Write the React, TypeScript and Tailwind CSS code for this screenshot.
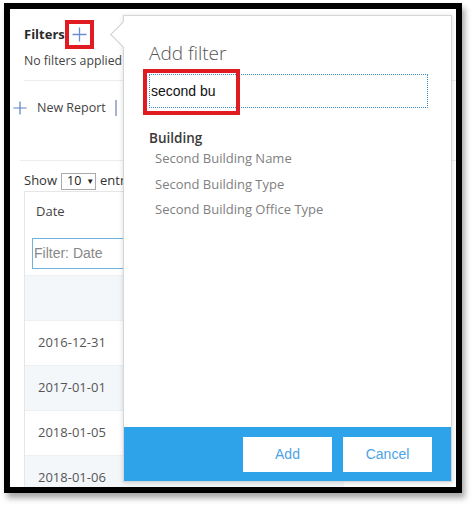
import React from "react";

const seg = { fontFamily: '"Open Sans", "Noto Sans", sans-serif' };
const arial = { fontFamily: '"Liberation Sans", Arial, sans-serif' };

function Plus({ size, color }: { size: number; color: string }) {
  return (
    <svg width={size} height={size} viewBox="0 0 16 16" fill="none">
      <path d="M8 0.5V15.5M0.5 8H15.5" stroke={color} strokeWidth="1.4" />
    </svg>
  );
}

export default function App() {
  const rows = [
    { d: "2016-12-31", bg: "bg-white" },
    { d: "2017-01-01", bg: "bg-[#f4f7fa]" },
    { d: "2018-01-05", bg: "bg-white" },
    { d: "2018-01-06", bg: "bg-[#f4f7fa]" },
  ];
  return (
    <div className="w-[474px] h-[506px] bg-white overflow-hidden" style={seg}>
      <div className="ml-[4px] mt-[3px] w-[458px] h-[490px] border-[6px] border-black bg-white relative overflow-hidden shadow-[3px_5px_6px_rgba(0,0,0,0.35)]">
        {/* page behind */}
        <div className="flex flex-col">
          <div className="pl-[14px] pt-[11px]">
            <div className="flex items-center h-[29px]">
              <span className="text-[13px] font-bold text-[#2b2b2b] leading-[29px]">Filters</span>
              <div className="w-[29px] h-[29px] border-[4px] border-[#e01b22] flex items-center justify-center">
                <Plus size={15} color="#6d8bd6" />
              </div>
            </div>
            <div className="mt-[2px] h-[20px] leading-[20px] text-[12.3px] text-[#444] whitespace-nowrap">No filters applied</div>
            <div className="mt-[9px] border-t border-[#ececec]" />
          </div>
          <div className="flex items-center h-[30px] mt-[12px] pl-[3px]">
            <Plus size={14} color="#5f82cc" />
            <span className="ml-[10px] text-[12.5px] text-[#444]">New Report</span>
            <span className="ml-[9px] w-[2px] h-[16px] bg-[#a8b2cc]" />
          </div>
          <div className="ml-[10px] mt-[37px] border-t border-[#ececec]" />
          <div className="pl-[14px] mt-[11px] flex items-center h-[18px] text-[13px] text-[#333]">
            <span>Show</span>
            <span className="ml-[4px] w-[35px] h-[17px] border border-[#aaa] flex items-center pl-[5px] text-[12.5px] text-[#222]">
              10<span className="ml-[5px] text-[8px]">▼</span>
            </span>
            <span className="ml-[4px]">entries</span>
          </div>
          <div className="ml-[14px] mt-[1px] w-[320px] border-l border-t border-[#e6e6e6]">
            <div className="h-[40px] flex items-center pl-[11px] text-[13px] text-[#444]">Date</div>
            <div className="h-[43px] pl-[7px] pt-[6px]">
              <div className="w-[150px] h-[31px] border border-[#6fb3dd] flex items-center pl-[1px] text-[14px] text-[#888]" style={arial}>
                Filter: Date
              </div>
            </div>
            <div className="h-[45px] bg-[#f4f7fa] border-t border-[#eef1f4]" />
            {rows.map((r) => (
              <div key={r.d} className={`h-[45px] ${r.bg} border-t border-[#eef1f4] flex items-center pl-[13px] text-[13px] text-[#555]`}>
                {r.d}
              </div>
            ))}
          </div>
        </div>

        {/* popover */}
        <div className="absolute left-[113px] top-[6px] w-[329px] h-[467px] bg-white border border-[#d6d6d6] shadow-[0_1px_5px_rgba(0,0,0,0.15)] flex flex-col">
          <div className="absolute left-[-10px] top-[9px] w-[19px] h-[19px] bg-white border-l border-b border-[#d0d0d0] rotate-45" />
          <div className="relative pl-[25px] pt-[24px]">
            <div className="text-[19px] font-light leading-[26px] text-[#555]">Add filter</div>
            <div className="relative mt-[8px] w-[279px] h-[34px] border border-dotted border-[#3b8bc6] flex items-center pl-[1px] text-[14px] text-[#111]" style={arial}>
              second bu
              <div className="absolute left-[-7px] top-[-6px] w-[97px] h-[46px] border-[4px] border-[#e01b22]" />
            </div>
            <div className="mt-[20px] h-[20px] leading-[20px] text-[13.5px] font-semibold text-[#3a3a3a]">Building</div>
            <div className="mt-[-2px] pl-[6px] text-[13px] text-[#808080] leading-[25.5px]">
              <div>Second Building Name</div>
              <div>Second Building Type</div>
              <div>Second Building Office Type</div>
            </div>
          </div>
          <div className="mt-auto h-[54px] bg-[#2ea3e9] flex justify-end items-start pt-[10px] pr-[19px] gap-[11px]">
            <button className="w-[89px] h-[35px] bg-white text-[14px] text-[#4ea2e6]" style={arial}>Add</button>
            <button className="w-[89px] h-[35px] bg-white text-[14px] text-[#4ea2e6]" style={arial}>Cancel</button>
          </div>
        </div>
      </div>
    </div>
  );
}
